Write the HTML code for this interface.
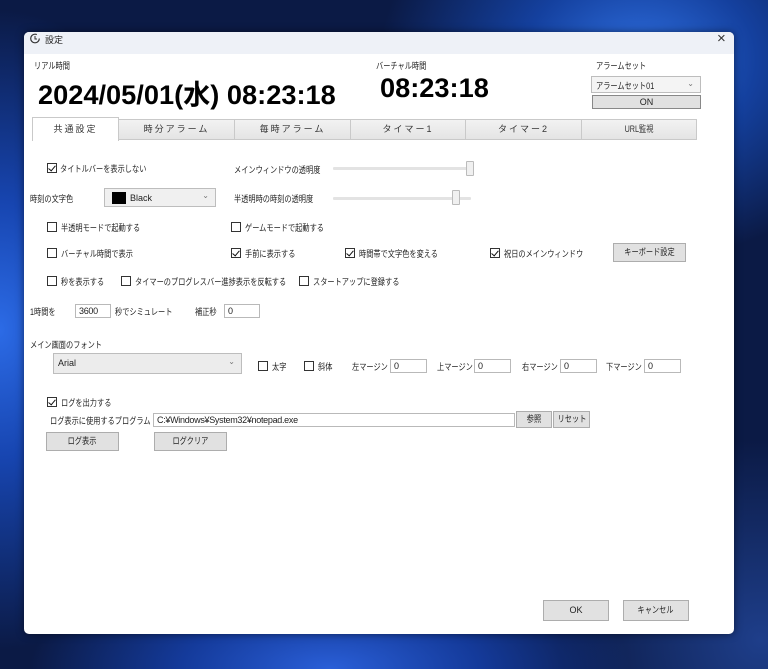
<!DOCTYPE html>
<html><head><meta charset="utf-8"><style>
*{margin:0;padding:0;box-sizing:border-box}
body{width:768px;height:669px;overflow:hidden;position:relative;font-family:"Liberation Sans","Noto Sans CJK JP",sans-serif;font-size:9px;color:#222;
background:radial-gradient(ellipse 260px 200px at 640px 60px,#2f6fe0 0%,#14409e 45%,rgba(10,25,70,0) 100%),
radial-gradient(ellipse 200px 320px at 0px 330px,#2c6be6 0%,#1745b0 40%,rgba(10,25,70,0) 100%),
radial-gradient(ellipse 300px 120px at 330px 669px,#2a5fd8 0%,#143a9a 50%,rgba(10,25,70,0) 100%),
radial-gradient(ellipse 200px 200px at 760px 640px,#1e3e8a 0%,rgba(10,25,70,0) 100%),
#0b1a45}
.a{position:absolute;white-space:nowrap}
.l{transform:scaleX(.8);transform-origin:0 0}
.s{display:inline-block;transform:scaleX(.8)}
.dlg{position:absolute;left:24px;top:32px;width:710px;height:602px;background:#fff;border-radius:5px;overflow:hidden;box-shadow:0 0 8px rgba(0,0,0,.5)}
.tb{position:absolute;left:24px;top:32px;width:710px;height:22px;background:#eef1f7;border-radius:5px 5px 0 0}
.cb{position:absolute;width:10px;height:10px;border:1px solid #333;background:#fff}
.cb.c::after{content:"";position:absolute;left:2px;top:0px;width:3px;height:6px;border:solid #111;border-width:0 1.5px 1.5px 0;transform:rotate(40deg)}
.btn{position:absolute;background:#e1e1e1;border:1px solid #adadad;text-align:center;font-size:9px;color:#222;white-space:nowrap}
.in{position:absolute;background:#fff;border:1px solid #b9b9b9;font-size:9px;padding-left:3px;line-height:12px;letter-spacing:-0.3px;white-space:nowrap;overflow:hidden}
.tab{position:absolute;top:119px;height:21px;background:linear-gradient(#f2f2f2,#e4e4e4);border:1px solid #c9c9c9;text-align:center;line-height:19px;font-size:9px;letter-spacing:2px;color:#333}
.big{font-weight:bold;font-size:27.2px;color:#000}
.tr{position:absolute;height:3px;background:#e3e3e3;border-radius:1px}
.th{position:absolute;width:8px;height:15px;background:#f0f0f0;border:1px solid #bbb;border-radius:1px}
.sel{position:absolute;background:#f0f0f0;border:1px solid #bdbdbd}
.sel i{position:absolute;right:6px;top:2px;font-style:normal;color:#777;font-size:8px}
</style></head><body>
<div class="dlg"></div>
<div class="tb"></div>
<svg class="a" style="left:29px;top:32px" width="12" height="12" viewBox="0 0 12 12"><circle cx="6" cy="6.5" r="4.3" fill="none" stroke="#333" stroke-width="1.2" stroke-dasharray="22 5"/><path d="M6 4v3h2" fill="none" stroke="#333" stroke-width="1"/></svg>
<div class="a" style="left:45px;top:33px">設定</div>
<div class="a" style="left:717px;top:30px;font-size:15px;color:#333">×</div>

<div class="a l" style="left:34px;top:59px">リアル時間</div>
<div class="a big" style="left:38px;top:72px">2024/05/01(水) 08:23:18</div>
<div class="a l" style="left:376px;top:59px">バーチャル時間</div>
<div class="a big" style="left:380px;top:72px">08:23:18</div>
<div class="a l" style="left:596px;top:59px">アラームセット</div>
<div class="sel" style="left:591px;top:76px;width:110px;height:17px;background:#f4f4f4"><span class="a l" style="left:4px;top:2px">アラームセット01</span><i>⌄</i></div>
<div class="btn" style="left:592px;top:95px;width:109px;height:14px;line-height:12px;border-color:#888">ON</div>

<div class="tab" style="left:118px;width:117px">時分アラーム</div>
<div class="tab" style="left:234px;width:117px">毎時アラーム</div>
<div class="tab" style="left:350px;width:116px">タイマー1</div>
<div class="tab" style="left:465px;width:117px">タイマー2</div>
<div class="tab" style="left:581px;width:116px;letter-spacing:0"><span class="s">URL監視</span></div>
<div class="tab" style="left:32px;top:117px;width:87px;height:24px;background:#fff;border-bottom:none;line-height:22px">共通設定</div>

<div class="cb c" style="left:47px;top:163px"></div><div class="a l" style="left:60px;top:162px">タイトルバーを表示しない</div>
<div class="a l" style="left:234px;top:163px">メインウィンドウの透明度</div>
<div class="tr" style="left:333px;top:167px;width:139px"></div><div class="th" style="left:466px;top:161px"></div>
<div class="a l" style="left:30px;top:192px">時刻の文字色</div>
<div class="sel" style="left:104px;top:188px;width:112px;height:19px"><div class="a" style="left:7px;top:3px;width:14px;height:12px;background:#000"></div><span class="a" style="left:25px;top:4px">Black</span><i>⌄</i></div>
<div class="a l" style="left:234px;top:192px">半透明時の時刻の透明度</div>
<div class="tr" style="left:333px;top:197px;width:138px"></div><div class="th" style="left:452px;top:190px"></div>

<div class="cb" style="left:47px;top:222px"></div><div class="a l" style="left:61px;top:221px">半透明モードで起動する</div>
<div class="cb" style="left:231px;top:222px"></div><div class="a l" style="left:245px;top:221px">ゲームモードで起動する</div>

<div class="cb" style="left:47px;top:248px"></div><div class="a l" style="left:61px;top:247px">バーチャル時間で表示</div>
<div class="cb c" style="left:231px;top:248px"></div><div class="a l" style="left:245px;top:247px">手前に表示する</div>
<div class="cb c" style="left:345px;top:248px"></div><div class="a l" style="left:359px;top:247px">時間帯で文字色を変える</div>
<div class="cb c" style="left:490px;top:248px"></div><div class="a l" style="left:504px;top:247px">祝日のメインウィンドウ</div>
<div class="btn" style="left:613px;top:243px;width:73px;height:19px;line-height:17px"><span class="s">キーボード設定</span></div>

<div class="cb" style="left:47px;top:276px"></div><div class="a l" style="left:61px;top:275px">秒を表示する</div>
<div class="cb" style="left:121px;top:276px"></div><div class="a l" style="left:135px;top:275px">タイマーのプログレスバー進捗表示を反転する</div>
<div class="cb" style="left:299px;top:276px"></div><div class="a l" style="left:313px;top:275px">スタートアップに登録する</div>

<div class="a l" style="left:30px;top:305px">1時間を</div>
<div class="in" style="left:75px;top:304px;width:36px;height:14px">3600</div>
<div class="a l" style="left:115px;top:305px">秒でシミュレート</div>
<div class="a l" style="left:195px;top:305px">補正秒</div>
<div class="in" style="left:224px;top:304px;width:36px;height:14px">0</div>

<div class="a l" style="left:30px;top:338px">メイン画面のフォント</div>
<div class="sel" style="left:53px;top:353px;width:189px;height:21px;background:#ececec"><span class="a" style="left:4px;top:4px">Arial</span><i style="top:3px">⌄</i></div>
<div class="cb" style="left:258px;top:361px"></div><div class="a l" style="left:272px;top:360px">太字</div>
<div class="cb" style="left:304px;top:361px"></div><div class="a l" style="left:318px;top:360px">斜体</div>
<div class="a l" style="left:352px;top:360px">左マージン</div><div class="in" style="left:390px;top:359px;width:37px;height:14px">0</div>
<div class="a l" style="left:437px;top:360px">上マージン</div><div class="in" style="left:474px;top:359px;width:37px;height:14px">0</div>
<div class="a l" style="left:522px;top:360px">右マージン</div><div class="in" style="left:560px;top:359px;width:37px;height:14px">0</div>
<div class="a l" style="left:606px;top:360px">下マージン</div><div class="in" style="left:644px;top:359px;width:37px;height:14px">0</div>

<div class="cb c" style="left:47px;top:397px"></div><div class="a l" style="left:61px;top:396px">ログを出力する</div>
<div class="a l" style="left:50px;top:414px">ログ表示に使用するプログラム</div>
<div class="in" style="left:153px;top:413px;width:362px;height:14px">C:¥Windows¥System32¥notepad.exe</div>
<div class="btn" style="left:516px;top:411px;width:36px;height:17px;line-height:15px"><span class="s">参照</span></div>
<div class="btn" style="left:553px;top:411px;width:37px;height:17px;line-height:15px"><span class="s">リセット</span></div>
<div class="btn" style="left:46px;top:432px;width:73px;height:19px;line-height:17px"><span class="s">ログ表示</span></div>
<div class="btn" style="left:154px;top:432px;width:73px;height:19px;line-height:17px"><span class="s">ログクリア</span></div>

<div class="btn" style="left:543px;top:600px;width:66px;height:21px;line-height:19px">OK</div>
<div class="btn" style="left:623px;top:600px;width:66px;height:21px;line-height:19px"><span class="s">キャンセル</span></div>
</body></html>
